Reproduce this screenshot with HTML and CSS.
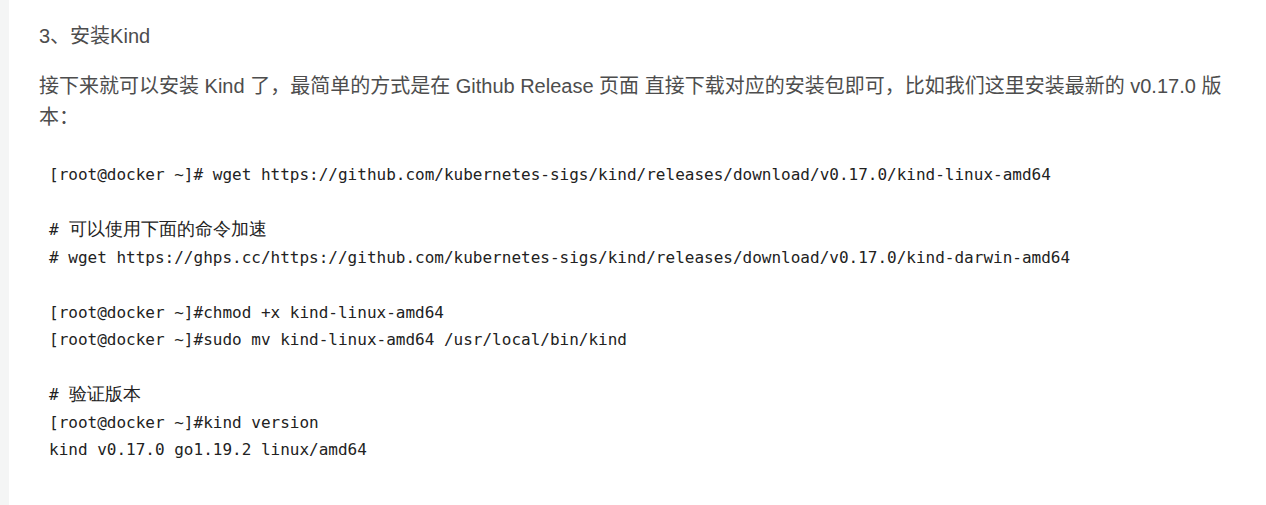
FILE: index.html
```html
<!DOCTYPE html>
<html>
<head>
    <meta charset="utf-8">
    <title>安装Kind</title>
    <link rel="stylesheet" href="styles.css">
</head>
<body>
    <div class="page-wrapper">
        <aside class="side-strip"></aside>
        <main class="article">
            <p>3、安装Kind</p>
            <p>接下来就可以安装 Kind 了，最简单的方式是在 Github Release 页面 直接下载对应的安装包即可，比如我们这里安装最新的 v0.17.0 版本：</p>
<pre class="code-block"><code>[root@docker ~]# wget https://github.com/kubernetes-sigs/kind/releases/download/v0.17.0/kind-linux-amd64

# <span class="zh">可以使用下面的命令加速</span>
# wget https://ghps.cc/https://github.com/kubernetes-sigs/kind/releases/download/v0.17.0/kind-darwin-amd64

[root@docker ~]#chmod +x kind-linux-amd64
[root@docker ~]#sudo mv kind-linux-amd64 /usr/local/bin/kind

# <span class="zh">验证版本</span>
[root@docker ~]#kind version
kind v0.17.0 go1.19.2 linux/amd64</code></pre>
        </main>
    </div>
</body>
</html>
```

FILE: styles.css
```css
:root {
    --strip-color: #f4f5f5;
    --text-color: #4d4d4d;
    --code-color: #222222;
    --white: #ffffff;
}
html, body {
    margin: 0;
    height: 100%;
    background-color: var(--white);
}
body {
    font-family: "Liberation Sans", "Noto Sans CJK SC", sans-serif;
    color: var(--text-color);
}
.page-wrapper {
    display: flex;
    min-height: 100%;
}
.side-strip {
    width: 9px;
    flex-shrink: 0;
    background-color: var(--strip-color);
}
.article {
    flex: 1;
    padding: 21px 30px 0 30px;
    max-width: 1195px;
}
.article p {
    font-size: 20px;
    line-height: 31px;
    margin: 0 0 19px 0;
}
.code-block {
    margin: 0;
    padding: 9px 10px;
    font-family: "DejaVu Sans Mono", "Noto Sans CJK SC", monospace;
    font-size: 16px;
    line-height: 27.5px;
    color: var(--code-color);
    background-color: var(--white);
}
/* chinese comments render a bit wider than the mono glyphs */
.code-block .zh {
    font-size: 17.5px;
    line-height: 1;
    margin-left: 1px;
}
```
